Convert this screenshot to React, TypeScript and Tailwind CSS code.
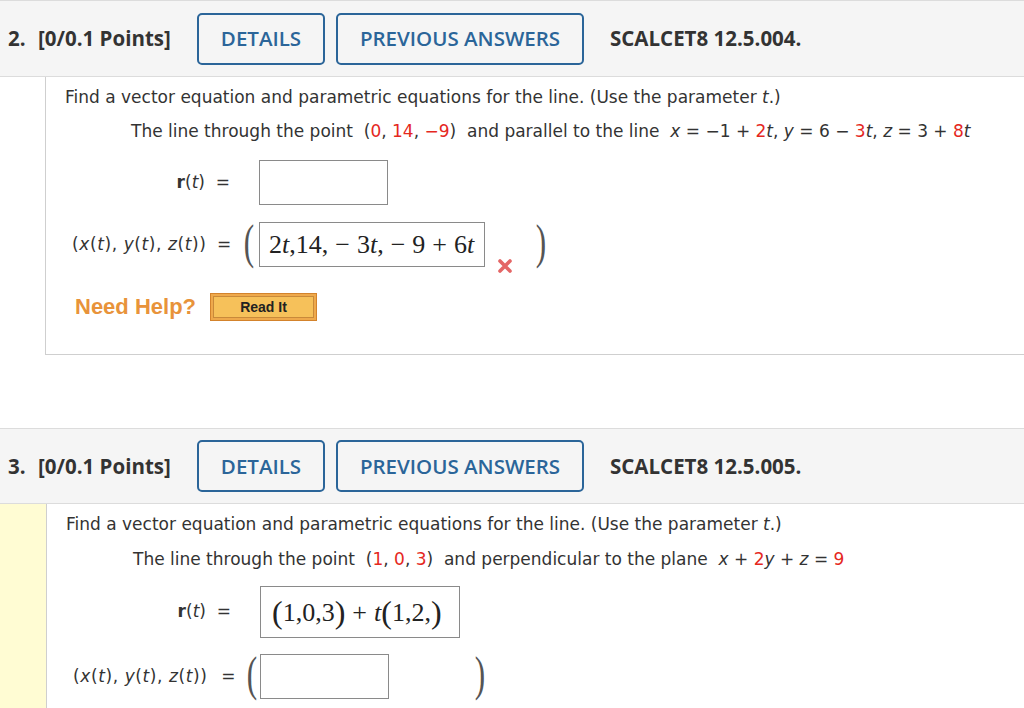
import React from "react";

const Red = ({ children }: { children: React.ReactNode }) => (
  <span className="text-[#e5281e]">{children}</span>
);
const I = ({ children }: { children: React.ReactNode }) => <i>{children}</i>;
const Op = ({ children }: { children: React.ReactNode }) => (
  <span className="mx-[7px]">{children}</span>
);

function Header({ num, code, first }: { num: string; code: string; first?: boolean }) {
  return (
    <div
      className={
        first
          ? "flex items-center h-[77px] bg-[#f5f5f5] border-t border-b border-[#dcdcdc] font-['Open_Sans',sans-serif] font-bold text-[20.5px] text-[#333]"
          : "flex items-center h-[76px] bg-[#f5f5f5] border-t border-b border-[#dcdcdc] font-['Open_Sans',sans-serif] font-bold text-[20.5px] text-[#333]"
      }
    >
      <span className="ml-[8px] w-[30px]">{num}</span>
      <span className="w-[159px]">[0/0.1 Points]</span>
      <div className="flex items-center justify-center w-[128px] h-[52px] border-2 border-[#2b6599] rounded-[5px] text-[#2b6599] font-semibold">
        DETAILS
      </div>
      <div className="ml-[11px] flex items-center justify-center w-[248px] h-[52px] border-2 border-[#2b6599] rounded-[5px] text-[#2b6599] font-semibold">
        PREVIOUS ANSWERS
      </div>
      <span className="ml-[26px]">{code}</span>
    </div>
  );
}

function BigParen({ ch }: { ch: string }) {
  return (
    <div className="h-[45px] flex items-center">
      <span className="font-['Liberation_Serif',serif] text-[48px] leading-none text-[#555] font-light inline-block scale-x-[0.65] -translate-y-[3px]">
        {ch}
      </span>
    </div>
  );
}

function RedX() {
  return (
    <svg width="16" height="16" viewBox="0 0 16 16" className="block">
      <path d="M3 3 L13 13 M13 3 L3 13" stroke="#e46666" strokeWidth="3.6" strokeLinecap="round" />
    </svg>
  );
}

const Label = () => (
  <span className="tracking-[0.6px]">
    (<I>x</I>(<I>t</I>), <I>y</I>(<I>t</I>), <I>z</I>(<I>t</I>))
  </span>
);

export default function App() {
  return (
    <div className="w-[1024px] h-[708px] overflow-hidden bg-white font-['DejaVu_Sans',Verdana,sans-serif] text-[#333]">
      <Header num="2." code="SCALCET8 12.5.004." first />
      {/* Question 2 body */}
      <div className="ml-[45px] border-l border-b border-[#cfcfcf] pl-[19px] pt-[9px] pb-[33px] text-[17px]">
        <div className="leading-[22px]">
          Find a vector equation and parametric equations for the line. (Use the parameter <I>t</I>.)
        </div>
        <div className="leading-[22px] mt-[12px] ml-[66px]">
          The line through the point&nbsp; (<Red>0</Red>, <Red>14</Red>, <Red>−9</Red>)&nbsp; and parallel to the line&nbsp; <I>x</I> = −1 + <Red>2</Red><I>t</I>, <I>y</I> = 6 − <Red>3</Red><I>t</I>, <I>z</I> = 3 + <Red>8</Red><I>t</I>
        </div>
        <div className="flex items-center mt-[18px]">
          <div className="w-[194px] flex justify-end pr-[29px]">
            <span>
              <b>r</b>(<I>t</I>) &nbsp;=
            </span>
          </div>
          <div className="w-[129px] h-[45px] border border-[#8a8a8a]" />
        </div>
        <div className="flex items-center h-[45px] mt-[17px]">
          <div className="w-[194px] flex items-center">
            <span className="ml-[7px] w-[145px]">
              <Label />
            </span>
            <span className="w-[24px]">=</span>
            <BigParen ch="(" />
          </div>
          <div className="w-[226px] h-[45px] border border-[#8a8a8a] flex items-center pl-[9px] font-['Liberation_Serif',serif] text-[26px] text-[#222] whitespace-nowrap">
            2<I>t</I>,14,<Op>−</Op>3<I>t</I>,<Op>−</Op>9<Op>+</Op>6<I>t</I>
          </div>
          <div className="ml-[12px] translate-y-[21px]">
            <RedX />
          </div>
          <div className="ml-[20px]">
            <BigParen ch=")" />
          </div>
        </div>
        <div className="flex items-center mt-[26px] ml-[10px]">
          <span className="font-['Liberation_Sans',Arial,sans-serif] font-bold text-[22px] leading-[28px] text-[#e8933a]">
            Need Help?
          </span>
          <div className="ml-[14px] w-[107px] h-[28px] border border-[#d3832c] bg-[#eea94c] p-[2px]">
            <div className="w-full h-full border border-[#c98a3a] bg-[#f6c15a] flex items-center justify-center font-['Liberation_Sans',Arial,sans-serif] font-bold text-[14px] text-[#222]">
              Read It
            </div>
          </div>
        </div>
      </div>
      <div className="h-[73px]" />
      <Header num="3." code="SCALCET8 12.5.005." />
      {/* Question 3 body */}
      <div className="flex">
        <div className="w-[47px] bg-[#fffcd3] border-r border-[#cfcfcf]" />
        <div className="flex-1 pl-[19px] pt-[9px] pb-[40px] text-[17px]">
          <div className="leading-[22px]">
            Find a vector equation and parametric equations for the line. (Use the parameter <I>t</I>.)
          </div>
          <div className="leading-[22px] mt-[13px] ml-[67px]">
            The line through the point&nbsp; (<Red>1</Red>, <Red>0</Red>, <Red>3</Red>)&nbsp; and perpendicular to the plane&nbsp; <I>x</I> + <Red>2</Red><I>y</I> + <I>z</I> = <Red>9</Red>
          </div>
          <div className="flex items-center mt-[16px]">
            <div className="w-[194px] flex justify-end pr-[29px]">
              <span>
                <b>r</b>(<I>t</I>) &nbsp;=
              </span>
            </div>
            <div className="w-[200px] h-[52px] border border-[#8a8a8a] flex items-center pl-[11px] font-['Liberation_Serif',serif] text-[26px] text-[#222] whitespace-nowrap">
              <span className="text-[32px] leading-none">(</span>1,0,3<span className="text-[32px] leading-none">)</span>
              <Op>+</Op>
              <I>t</I>
              <span className="text-[32px] leading-none">(</span>1,2,<span className="text-[32px] leading-none">)</span>
            </div>
          </div>
          <div className="flex items-center h-[45px] mt-[16px]">
            <div className="w-[194px] flex items-center">
              <span className="ml-[7px] w-[149px]">
                <Label />
              </span>
              <span className="w-[23px]">=</span>
              <BigParen ch="(" />
            </div>
            <div className="w-[129px] h-[45px] border border-[#8a8a8a]" />
            <div className="ml-[83px]">
              <BigParen ch=")" />
            </div>
          </div>
        </div>
      </div>
    </div>
  );
}
